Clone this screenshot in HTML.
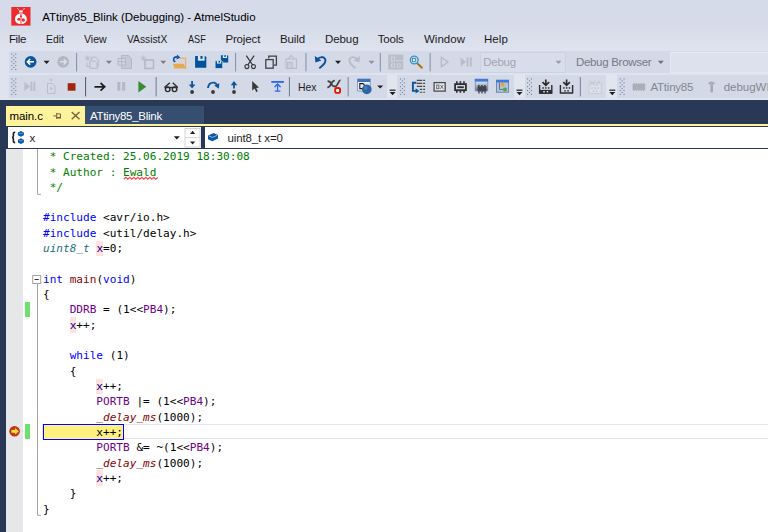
<!DOCTYPE html>
<html>
<head>
<meta charset="utf-8">
<title>ATtiny85_Blink (Debugging) - AtmelStudio</title>
<style>
html,body{margin:0;padding:0;}
body{width:768px;height:532px;overflow:hidden;position:relative;background:#d6dbe9;font-family:"Liberation Sans",sans-serif;font-size:12px;color:#1b1b1c;}
.abs{position:absolute;}
.ui{font-size:11.5px;line-height:14px;white-space:nowrap;}
#titletext{left:42px;top:10px;color:#000;}
.menu{top:32px;color:#1b1b1c;}
.tb{background:#d3d9e7;}
.ov{background:#e1e5f0;}
#dark{left:0;top:100px;width:768px;height:432px;background:#293955;}
#tab1{left:6px;top:106px;width:79px;height:20px;background:#fff29d;}
#tab1 span{position:absolute;left:4px;top:2px;color:#000;}
#tab2{left:85px;top:106px;width:119px;height:18px;background:#364e6f;}
#tab2 span{position:absolute;left:4px;top:2px;color:#fff;}
#tabline{left:6px;top:124px;width:762px;height:2px;background:#fff29d;}
#nav1{left:8px;top:127px;width:193px;height:21px;background:#fff;}
#nav2{left:205px;top:127px;width:563px;height:21px;background:#fff;}
#editor{left:6px;top:149px;width:762px;height:383px;background:#fff;}
#imargin{left:6px;top:149px;width:17px;height:383px;background:#e6e7e8;}
#code{left:0;top:1px;}
.code{font-family:"DejaVu Sans Mono","Liberation Mono",monospace;font-size:11.08px;line-height:15px;white-space:pre;left:43px;color:#000;height:15px;}
.c{color:#008000}.k{color:#0000ff}.m{color:#6f008a}.f{color:#880000}.t{color:#216f85;font-style:italic}.fi{color:#880000;font-style:italic}
.x{color:#000080;}
.u{position:relative;top:-1px;}
.hl{background:#ffe1e1;width:6.7px;height:15.5px;}
.sq{text-decoration:underline wavy #ff0000 1px;text-underline-offset:2px;}
svg{position:absolute;left:0;top:0;}
</style>
</head>
<body>

<div class="abs" style="left:0;top:24px;width:768px;height:76px;background:linear-gradient(#d6dbe9 0px,#dfe3ef 26px,#dfe3ef 76px)"></div>
<div class="abs tb" style="left:9px;top:51px;width:759px;height:22px"></div>
<div class="abs tb" style="left:9px;top:75px;width:378px;height:23px"></div>
<div class="abs ov" style="left:387px;top:75px;width:10px;height:23px"></div>
<div class="abs tb" style="left:397px;top:75px;width:117px;height:23px"></div>
<div class="abs ov" style="left:514px;top:75px;width:11px;height:23px"></div>
<div class="abs tb" style="left:525px;top:75px;width:81px;height:23px"></div>
<div class="abs ov" style="left:606px;top:75px;width:11px;height:23px"></div>
<div class="abs tb" style="left:617px;top:75px;width:151px;height:23px"></div>
<div class="abs ui" id="t_title" style="left:42.15px;top:10px;color:#000;letter-spacing:-0.013px">ATtiny85_Blink (Debugging) - AtmelStudio</div>
<div class="abs ui" id="t_file" style="left:8.90px;top:32px;color:#1b1b1c;letter-spacing:-0.317px">File</div>
<div class="abs ui" id="t_edit" style="left:45.90px;top:32px;color:#1b1b1c;letter-spacing:0.000px;transform:scaleX(0.9027);transform-origin:0 0">Edit</div>
<div class="abs ui" id="t_view" style="left:84.40px;top:32px;color:#1b1b1c;letter-spacing:0.000px;transform:scaleX(0.9172);transform-origin:0 0">View</div>
<div class="abs ui" id="t_va" style="left:127.40px;top:32px;color:#1b1b1c;letter-spacing:0.000px;transform:scaleX(0.8922);transform-origin:0 0">VAssistX</div>
<div class="abs ui" id="t_asf" style="left:187.65px;top:32px;color:#1b1b1c;letter-spacing:0.000px;transform:scaleX(0.7933);transform-origin:0 0">ASF</div>
<div class="abs ui" id="t_proj" style="left:225.40px;top:32px;color:#1b1b1c;letter-spacing:-0.142px">Project</div>
<div class="abs ui" id="t_build" style="left:279.90px;top:32px;color:#1b1b1c;letter-spacing:-0.062px">Build</div>
<div class="abs ui" id="t_debug" style="left:324.90px;top:32px;color:#1b1b1c;letter-spacing:-0.050px">Debug</div>
<div class="abs ui" id="t_tools" style="left:377.65px;top:32px;color:#1b1b1c;letter-spacing:-0.175px">Tools</div>
<div class="abs ui" id="t_window" style="left:423.90px;top:32px;color:#1b1b1c;letter-spacing:0.040px">Window</div>
<div class="abs ui" id="t_help" style="left:483.90px;top:32px;color:#1b1b1c;letter-spacing:0.100px">Help</div>
<div class="abs" style="left:480px;top:52px;width:84px;height:19px;border:1px solid #cbd2e2;background:#d8ddeb;box-sizing:content-box"></div>
<div class="abs ui" id="t_cdebug" style="left:483.15px;top:55px;color:#a2a6b2;letter-spacing:-0.212px">Debug</div>
<div class="abs ui" id="t_dbrowser" style="left:575.90px;top:55px;color:#767a85;letter-spacing:-0.292px">Debug Browser</div>
<div class="abs" style="left:670px;top:52px;width:110px;height:19px;border:1px solid #e6e9f3;background:#dde1ed"></div>
<div class="abs ui" id="t_hex" style="left:297.65px;top:80px;color:#1e1e1e;letter-spacing:0.000px;transform:scaleX(0.9052);transform-origin:0 0">Hex</div>
<div class="abs ui" id="t_attiny" style="left:650.40px;top:80px;color:#848893;letter-spacing:-0.214px">ATtiny85</div>
<div class="abs ui" id="t_dw" style="left:723.65px;top:80px;color:#848893;letter-spacing:0.000px">debugWIRE</div>
<div class="abs" id="dark"></div>
<div class="abs" id="tab1"></div>
<div class="abs" id="tab2"></div>
<div class="abs" id="tabline"></div>
<div class="abs" id="nav1"></div>
<div class="abs" id="nav2"></div>
<div class="abs" id="editor"></div>
<div class="abs" id="imargin"></div>

<div class="abs ui" id="t_main" style="left:9.40px;top:109px;color:#000;letter-spacing:-0.070px">main.c</div>
<div class="abs ui" id="t_tab2" style="left:89.90px;top:109px;color:#fff;letter-spacing:-0.273px">ATtiny85_Blink</div>
<div class="abs ui" id="t_navx" style="left:29.40px;top:131px;color:#1e1e1e;letter-spacing:0.000px">x</div>
<div class="abs ui" id="t_nav2" style="left:227.40px;top:131px;color:#1e1e1e;letter-spacing:-0.100px">uint8_t x=0</div>
<div class="abs" style="left:42px;top:424px;width:726px;height:13px;border-top:1px solid #e4e4f0;border-bottom:1px solid #e4e4f0;border-left:1px solid #e4e4f0"></div>
<div class="abs" style="left:43px;top:424px;width:79px;height:14px;border:1px solid #0000ff;background:#fff17f"></div>
<div class="abs" style="left:25px;top:302px;width:5px;height:15px;background:#6ce26c"></div>
<div class="abs" style="left:25px;top:424px;width:5px;height:15px;background:#6ce26c"></div>
<div class="abs hl" style="left:96.26px;top:240.5px"></div>
<div class="abs hl" style="left:69.58px;top:317.2px"></div>
<div class="abs hl" style="left:96.26px;top:378.5px"></div>
<div class="abs hl" style="left:96.26px;top:470.3px"></div>
<div class="abs" id="code">
<div class="abs code" style="top:148px"><span class="c"> * Created: 25.06.2019 18:30:08</span></div>
<div class="abs code" style="top:164px"><span class="c"> * Author : Ewald</span></div>
<div class="abs code" style="top:179px"><span class="c"> */</span></div>
<div class="abs code" style="top:209px"><span class="k">#include</span> &lt;avr/io.h&gt;</div>
<div class="abs code" style="top:225px"><span class="k">#include</span> &lt;util/delay.h&gt;</div>
<div class="abs code" style="top:240px"><span class="t">uint8<span class="u">_</span>t</span> <span class="x">x</span>=0;</div>
<div class="abs code" style="top:271px"><span class="k">int</span> <span class="f">main</span>(<span class="k">void</span>)</div>
<div class="abs code" style="top:286px">{</div>
<div class="abs code" style="top:301px">    <span class="m">DDRB</span> = (1&lt;&lt;<span class="m">PB4</span>);</div>
<div class="abs code" style="top:317px">    <span class="x">x</span>++;</div>
<div class="abs code" style="top:347px">    <span class="k">while</span> (1)</div>
<div class="abs code" style="top:363px">    {</div>
<div class="abs code" style="top:378px">        <span class="x">x</span>++;</div>
<div class="abs code" style="top:393px">        <span class="m">PORTB</span> |= (1&lt;&lt;<span class="m">PB4</span>);</div>
<div class="abs code" style="top:409px">        <span class="fi"><span class="u">_</span>delay<span class="u">_</span>ms</span>(1000);</div>
<div class="abs code" style="top:424px">        x++;</div>
<div class="abs code" style="top:439px">        <span class="m">PORTB</span> &amp;= ~(1&lt;&lt;<span class="m">PB4</span>);</div>
<div class="abs code" style="top:455px">        <span class="fi"><span class="u">_</span>delay<span class="u">_</span>ms</span>(1000);</div>
<div class="abs code" style="top:470px">        <span class="x">x</span>++;</div>
<div class="abs code" style="top:485px">    }</div>
<div class="abs code" style="top:501px">}</div>
</div>
<svg width="768" height="532" viewBox="0 0 768 532">
<g>
<rect x="11.3" y="7" width="19.2" height="18.6" fill="#ed2b2f"/>
<path d="M20.9 13.6 C24.6 13.6 26.8 16.2 26.8 19.2 C26.8 22.2 24.4 24 20.9 24 C17.4 24 15 22.2 15 19.2 C15 16.2 17.2 13.6 20.9 13.6 Z" fill="#fff"/>
<path d="M18.9 12.6 Q19 10.2 20.9 10.2 Q22.8 10.2 22.9 12.6 Z" fill="#fff"/>
<path d="M19.6 10.9 L18 8.9 M22.2 10.9 L23.8 8.9" stroke="#ffd5d5" stroke-width="0.7" fill="none"/>
<circle cx="17.7" cy="8.6" r="0.6" fill="#ffd5d5"/><circle cx="24.1" cy="8.6" r="0.6" fill="#ffd5d5"/>
<rect x="20.5" y="13.8" width="0.9" height="10.2" fill="#ed2b2f"/>
<circle cx="18.8" cy="19.2" r="1.5" fill="#ed2b2f"/>
<circle cx="23.3" cy="20" r="1.7" fill="#ed2b2f"/>
<circle cx="21" cy="16.3" r="1.1" fill="#ed2b2f"/>
</g>
<g fill="#74809b" transform="translate(11.3 53.4)"><rect x="0" y="0.00" width="1.1" height="1.1"/><rect x="3.9" y="0.00" width="1.1" height="1.1"/><rect x="1.95" y="1.93" width="1.1" height="1.1"/><rect x="0" y="3.86" width="1.1" height="1.1"/><rect x="3.9" y="3.86" width="1.1" height="1.1"/><rect x="1.95" y="5.79" width="1.1" height="1.1"/><rect x="0" y="7.72" width="1.1" height="1.1"/><rect x="3.9" y="7.72" width="1.1" height="1.1"/><rect x="1.95" y="9.65" width="1.1" height="1.1"/><rect x="0" y="11.58" width="1.1" height="1.1"/><rect x="3.9" y="11.58" width="1.1" height="1.1"/><rect x="1.95" y="13.51" width="1.1" height="1.1"/><rect x="0" y="15.44" width="1.1" height="1.1"/><rect x="3.9" y="15.44" width="1.1" height="1.1"/></g>
<g fill="#74809b" transform="translate(11.3 78.4)"><rect x="0" y="0.00" width="1.1" height="1.1"/><rect x="3.9" y="0.00" width="1.1" height="1.1"/><rect x="1.95" y="1.93" width="1.1" height="1.1"/><rect x="0" y="3.86" width="1.1" height="1.1"/><rect x="3.9" y="3.86" width="1.1" height="1.1"/><rect x="1.95" y="5.79" width="1.1" height="1.1"/><rect x="0" y="7.72" width="1.1" height="1.1"/><rect x="3.9" y="7.72" width="1.1" height="1.1"/><rect x="1.95" y="9.65" width="1.1" height="1.1"/><rect x="0" y="11.58" width="1.1" height="1.1"/><rect x="3.9" y="11.58" width="1.1" height="1.1"/><rect x="1.95" y="13.51" width="1.1" height="1.1"/><rect x="0" y="15.44" width="1.1" height="1.1"/><rect x="3.9" y="15.44" width="1.1" height="1.1"/></g>
<g fill="#74809b" transform="translate(399.9 78.4)"><rect x="0" y="0.00" width="1.1" height="1.1"/><rect x="3.9" y="0.00" width="1.1" height="1.1"/><rect x="1.95" y="1.93" width="1.1" height="1.1"/><rect x="0" y="3.86" width="1.1" height="1.1"/><rect x="3.9" y="3.86" width="1.1" height="1.1"/><rect x="1.95" y="5.79" width="1.1" height="1.1"/><rect x="0" y="7.72" width="1.1" height="1.1"/><rect x="3.9" y="7.72" width="1.1" height="1.1"/><rect x="1.95" y="9.65" width="1.1" height="1.1"/><rect x="0" y="11.58" width="1.1" height="1.1"/><rect x="3.9" y="11.58" width="1.1" height="1.1"/><rect x="1.95" y="13.51" width="1.1" height="1.1"/><rect x="0" y="15.44" width="1.1" height="1.1"/><rect x="3.9" y="15.44" width="1.1" height="1.1"/></g>
<g fill="#74809b" transform="translate(527.0 78.4)"><rect x="0" y="0.00" width="1.1" height="1.1"/><rect x="3.9" y="0.00" width="1.1" height="1.1"/><rect x="1.95" y="1.93" width="1.1" height="1.1"/><rect x="0" y="3.86" width="1.1" height="1.1"/><rect x="3.9" y="3.86" width="1.1" height="1.1"/><rect x="1.95" y="5.79" width="1.1" height="1.1"/><rect x="0" y="7.72" width="1.1" height="1.1"/><rect x="3.9" y="7.72" width="1.1" height="1.1"/><rect x="1.95" y="9.65" width="1.1" height="1.1"/><rect x="0" y="11.58" width="1.1" height="1.1"/><rect x="3.9" y="11.58" width="1.1" height="1.1"/><rect x="1.95" y="13.51" width="1.1" height="1.1"/><rect x="0" y="15.44" width="1.1" height="1.1"/><rect x="3.9" y="15.44" width="1.1" height="1.1"/></g>
<g fill="#74809b" transform="translate(619.6 78.4)"><rect x="0" y="0.00" width="1.1" height="1.1"/><rect x="3.9" y="0.00" width="1.1" height="1.1"/><rect x="1.95" y="1.93" width="1.1" height="1.1"/><rect x="0" y="3.86" width="1.1" height="1.1"/><rect x="3.9" y="3.86" width="1.1" height="1.1"/><rect x="1.95" y="5.79" width="1.1" height="1.1"/><rect x="0" y="7.72" width="1.1" height="1.1"/><rect x="3.9" y="7.72" width="1.1" height="1.1"/><rect x="1.95" y="9.65" width="1.1" height="1.1"/><rect x="0" y="11.58" width="1.1" height="1.1"/><rect x="3.9" y="11.58" width="1.1" height="1.1"/><rect x="1.95" y="13.51" width="1.1" height="1.1"/><rect x="0" y="15.44" width="1.1" height="1.1"/><rect x="3.9" y="15.44" width="1.1" height="1.1"/></g>
<rect x="76.0" y="52.8" width="1.1" height="18.6" fill="#8a94ab"/>
<rect x="235.0" y="52.8" width="1.1" height="18.6" fill="#8a94ab"/>
<rect x="305.4" y="52.8" width="1.1" height="18.6" fill="#8a94ab"/>
<rect x="379.8" y="52.8" width="1.1" height="18.6" fill="#8a94ab"/>
<rect x="429.6" y="52.8" width="1.1" height="18.6" fill="#8a94ab"/>
<rect x="85.0" y="77" width="1.1" height="19.4" fill="#5a6276"/>
<rect x="155.6" y="77" width="1.1" height="19.4" fill="#78829a"/>
<rect x="288.9" y="77" width="1.1" height="19.4" fill="#78829a"/>
<rect x="347.6" y="77" width="1.1" height="19.4" fill="#808aa1"/>
<rect x="579.8" y="77" width="1.1" height="19.4" fill="#7f8699"/>
<path transform="translate(46.6 62.3)" fill="#1e1e1e" d="M-3 -1.5 L3 -1.5 L0 1.7 Z"/>
<path transform="translate(108.9 62.3)" fill="#7d8087" d="M-3 -1.5 L3 -1.5 L0 1.7 Z"/>
<path transform="translate(163.3 62.3)" fill="#7d8087" d="M-3 -1.5 L3 -1.5 L0 1.7 Z"/>
<path transform="translate(338.0 62.3)" fill="#1e1e1e" d="M-3 -1.5 L3 -1.5 L0 1.7 Z"/>
<path transform="translate(371.5 62.3)" fill="#8f9299" d="M-3 -1.5 L3 -1.5 L0 1.7 Z"/>
<path transform="translate(558.5 62.3)" fill="#9a9ea9" d="M-3 -1.5 L3 -1.5 L0 1.7 Z"/>
<path transform="translate(660.8 62.3)" fill="#6e727c" d="M-3 -1.5 L3 -1.5 L0 1.7 Z"/>
<path transform="translate(380.2 86.9)" fill="#1e1e1e" d="M-3 -1.5 L3 -1.5 L0 1.7 Z"/>
<g transform="translate(392.6 93.0)" fill="#1e1e1e"><rect x="-3" y="-3.4" width="6" height="1.2"/><path d="M-3 -1 L3 -1 L0 2.2 Z"/></g>
<g transform="translate(519.5 93.0)" fill="#1e1e1e"><rect x="-3" y="-3.4" width="6" height="1.2"/><path d="M-3 -1 L3 -1 L0 2.2 Z"/></g>
<g transform="translate(612.3 93.0)" fill="#1e1e1e"><rect x="-3" y="-3.4" width="6" height="1.2"/><path d="M-3 -1 L3 -1 L0 2.2 Z"/></g>
<circle cx="30.6" cy="61.8" r="5.9" fill="#0c569f"/>
<path d="M34 61.8 H27.6 M30.2 59 L27.4 61.8 L30.2 64.6" stroke="#fff" stroke-width="1.5" fill="none"/>
<circle cx="63.2" cy="61.8" r="5.9" fill="#b3b7c0"/>
<path d="M59.8 61.8 H66.2 M63.6 59 L66.4 61.8 L63.6 64.6" stroke="#d9dde8" stroke-width="1.5" fill="none"/>
<g stroke="#b4b9c5" fill="none" stroke-width="1">
<path d="M91.6 60.4 V57.2 H95.6 L98.2 59.8 V66.4 H97.6"/>
<path d="M89.9 61 H94.6 L97.2 63.4 V68.3 H89.9 Z" fill="#d3d9e7"/>
<path d="M87 63 V66.6 H89.4"/>
<path d="M87.7 55.4 V61 M84.9 58.2 H90.5 M85.7 56.2 L89.7 60.2 M89.7 56.2 L85.7 60.2" stroke-width="0.7"/>
</g>
<g stroke="#b4b9c5" fill="#c4c9d5" stroke-width="1">
<path d="M121.5 55.5 H128.5 L131.5 58.5 V68.5 H121.5 Z"/>
<rect x="118" y="58.5" width="7.5" height="6.5" fill="#d0d5e0"/>
<path d="M121.7 58.5 V65 M118 61.7 H125.5" stroke="#b4b9c5"/>
</g>
<g stroke="#b4b9c5" fill="none">
<rect x="145" y="60" width="8.5" height="8.5" stroke-width="1.6" fill="#d3d8e4"/>
<path d="M143.5 55.3 V61 M140.7 58.2 H146.3 M141.5 56.2 L145.5 60.2 M145.5 56.2 L141.5 60.2" stroke-width="0.7"/>
</g>
<path d="M176.4 58.2 H185.6 V64 H176.4 Z" fill="#d6d4e1"/>
<path d="M179.6 58.2 H185.7 V68.3" stroke="#e3a951" stroke-width="1" fill="none"/>
<path d="M173 63.8 H183.6 L186.1 68.5 H174.4 Z" fill="#e5a94f"/>
<path d="M173.9 61.2 Q172.6 56.6 177.6 56.9" stroke="#0c5aa6" stroke-width="1.7" fill="none"/>
<path d="M177 54.6 L180.4 57.6 L176.6 59.6 Z" fill="#0c5aa6"/>
<path d="M173.2 60.4 L176.2 60.9 L174.2 62.6 Z" fill="#0c5aa6"/>
<path d="M195.1 56 H205.2 L206.3 57.2 V67.7 H195.1 Z" fill="#00539c"/>
<rect x="197.9" y="56" width="6.7" height="4.7" fill="#dfe4f1"/>
<rect x="200.4" y="56" width="2.2" height="2.8" fill="#00539c"/>
<path d="M220.9 55.2 H227.4 L228.2 56 V62.5 H220.9 Z" fill="#00539c"/>
<rect x="222.8" y="55.2" width="4.2" height="2.8" fill="#dfe4f1"/>
<rect x="224.4" y="55.2" width="1.4" height="1.8" fill="#00539c"/>
<path d="M215.1 60.8 H222 L222.7 61.6 V68.5 H215.1 Z" fill="#00539c" stroke="#d3d9e7" stroke-width="0.8"/>
<rect x="217" y="60.9" width="4.2" height="2.7" fill="#dfe4f1"/>
<rect x="218.6" y="60.9" width="1.4" height="1.8" fill="#00539c"/>
<g stroke="#3b3b3b" fill="none" stroke-width="1.3">
<path d="M246.3 55.6 L252.6 65 M254.1 55.6 L247.8 65"/>
<circle cx="246.9" cy="66.6" r="2" stroke-width="1.1"/>
<circle cx="253.5" cy="66.6" r="2" stroke-width="1.1"/>
</g>
<g stroke="#424242" fill="none" stroke-width="1.3">
<path d="M268.8 58.6 V56.2 H276.4 V65.2 H274"/>
<rect x="265.8" y="59.6" width="7.4" height="8.6" fill="#d5dbe9"/>
</g>
<g stroke="#b9bdc8" fill="none" stroke-width="1.1">
<path d="M288 59 H296.5 V68.4 H286 V59 H288 L291.2 55.4 L294.4 59"/>
<rect x="287.5" y="62.5" width="4.6" height="6" fill="#cbd0dc"/>
</g>
<path d="M316.6 59.6 Q322.5 54.8 325.3 59.3 Q326.6 62.8 319.3 68.2" stroke="#0c4f9e" stroke-width="2" fill="none"/>
<path d="M314.8 56 L315.4 62.6 L321.4 60.6 Z" fill="#0c4f9e"/>
<path d="M358.2 59.6 Q352.3 54.8 349.5 59.3 Q348.2 62.8 355.5 68.2" stroke="#b7bbc6" stroke-width="1.8" fill="none"/>
<path d="M360 56 L359.4 62.6 L353.4 60.6 Z" fill="#b7bbc6"/>
<rect x="388.2" y="54.6" width="15" height="15" fill="#babec8"/>
<g stroke="#cdd2dd" fill="none" stroke-width="1">
<rect x="391.5" y="57" width="3" height="4"/>
<rect x="391.5" y="64" width="3" height="3"/>
<rect x="397.2" y="64" width="3" height="3"/>
<path d="M396 60.5 H403"/>
</g>
<path d="M417 63 L421.8 67.6" stroke="#c68428" stroke-width="2.4" stroke-linecap="round"/>
<path d="M417.4 63.4 L421.6 67.4" stroke="#5b4a2a" stroke-width="0.6"/>
<circle cx="414.2" cy="60" r="3.9" fill="#a9dcf0" stroke="#3d8fc6" stroke-width="1.3"/>
<rect x="412.5" y="58.5" width="3" height="2.8" fill="#d9eff8" stroke="#2f6aa0" stroke-width="0.7"/>
<path d="M441.3 57.2 L448 62 L441.3 66.8 Z" fill="none" stroke="#b4b8c3" stroke-width="1.2"/>
<path d="M460.6 57.4 L466 62 L460.6 66.6 Z" fill="#b9bdc8"/>
<rect x="466.6" y="57.4" width="1.9" height="9.2" fill="#b9bdc8"/>
<rect x="469.8" y="57.4" width="1.9" height="9.2" fill="#b9bdc8"/>
<path d="M24.4 81.8 L30 86.4 L24.4 91 Z" fill="#babec9"/>
<rect x="30.4" y="81.8" width="1.9" height="9.2" fill="#babec9"/>
<rect x="33.4" y="81.8" width="1.9" height="9.2" fill="#babec9"/>
<g stroke="#b9bdc8" fill="none" stroke-width="1">
<path d="M47.5 83.5 H52.5 L55 86 V93.5 H47.5 Z"/>
<path d="M50.3 86.6 L53 88.6 L50.3 90.6 Z" fill="#b9bdc8" stroke="none"/>
<path d="M49.4 79.2 H52.8 L51.1 81.4 Z" fill="#b9bdc8" stroke="none"/>
</g>
<rect x="67.7" y="83.2" width="7.8" height="7.5" fill="#a1260d"/>
<path d="M94.5 86.8 H104.2 M100.5 83 L104.7 86.8 L100.5 90.6" stroke="#1e1e1e" stroke-width="1.7" fill="none"/>
<rect x="117.3" y="82" width="3.1" height="8.7" fill="#b5b9c4"/><rect x="122.1" y="82" width="3.1" height="8.7" fill="#b5b9c4"/>
<path d="M138.4 81.1 L146.3 86.8 L138.4 92.5 Z" fill="#388a34"/>
<g stroke="#2d2d2d" fill="none" stroke-width="1.4">
<circle cx="167.7" cy="89.3" r="2.3"/><circle cx="174.5" cy="89.3" r="2.3"/>
<path d="M164.5 87.5 H177.7" stroke-width="1.3"/>
<path d="M164.7 87.3 L169.9 82.8 M177.5 87.3 L172.7 82.8"/>
</g>
<path d="M192.1 81 V86" stroke="#0c569f" stroke-width="1.8"/>
<path d="M188.8 84.6 H195.4 L192.1 88.6 Z" fill="#0c569f"/>
<circle cx="192.1" cy="92" r="1.9" fill="#383838"/>
<path d="M208 88 Q208.6 82.4 213.4 82.6 Q216.6 82.8 217.4 86" stroke="#0c569f" stroke-width="1.9" fill="none"/>
<path d="M214.2 85.4 L219.4 83.2 L218.8 88.8 Z" fill="#0c569f"/>
<circle cx="213" cy="92" r="1.9" fill="#383838"/>
<path d="M234 88.4 V84" stroke="#0c569f" stroke-width="1.8"/>
<path d="M230.7 85.2 H237.3 L234 81 Z" fill="#0c569f"/>
<circle cx="234" cy="92" r="1.9" fill="#383838"/>
<path d="M252.2 81 V90.6 L254.6 88.6 L256.2 92 L257.8 91.2 L256.2 88 L259 87.6 Z" fill="#383838"/>
<rect x="271.3" y="81" width="12.6" height="1.8" fill="#2b66f0"/>
<path d="M277.6 85 V91 M274.8 91.1 H280.4" stroke="#2b66f0" stroke-width="1.3" fill="none"/>
<path d="M274.6 87 L277.6 84 L280.6 87" stroke="#2b66f0" stroke-width="1.3" fill="none"/>
<path d="M327.6 81.2 Q330.4 81.4 331.5 84 T335.2 86.4 M327.4 87.6 Q330 86.8 331.4 83.6 T334.8 80.6 M334.6 87.2 Q337 86 338.2 83 T340.6 80.4" stroke="#404040" stroke-width="1.8" fill="none"/>
<rect x="335.2" y="88" width="4.9" height="4.9" rx="1.7" fill="#fff" stroke="#e51400" stroke-width="1.9"/>
<rect x="357.6" y="79" width="12.6" height="12" fill="#e8edf6" stroke="#6f8fc4" stroke-width="0.8"/>
<rect x="357.6" y="79" width="12.6" height="3" fill="#3f73bd"/>
<path d="M359.8 83.6 H363 L364.4 85 V88.6 H359.8 Z" fill="none" stroke="#1e1e1e" stroke-width="1.1"/>
<circle cx="366.8" cy="89.4" r="4.8" fill="#2e64a6"/>
<circle cx="365.6" cy="88" r="2" fill="#4f86c6" opacity="0.7"/>
<path d="M416.8 80.4 H422.3 M423.2 80.4 H425.1 M416.8 83.4 H422.3 M423.2 83.4 H425.1 M416.8 86.4 H422.3 M423.2 86.4 H425.1 M419.8 89.4 H422.3 M423.2 89.4 H425.1 M419.8 92.3 H422.3 M423.2 92.3 H425.1" stroke="#4a4a4a" stroke-width="1.1" fill="none"/>
<path d="M416.4 82.8 H412.9 V90.9 H416.4" stroke="#0c569f" stroke-width="1.9" fill="none"/>
<path d="M415.6 88.2 L419.5 90.9 L415.6 93.6 Z" fill="#0c569f"/>
<rect x="434.1" y="82.6" width="11.1" height="8.5" fill="#e2e5ee" stroke="#4d4d4d" stroke-width="1.3"/>
<rect x="436.7" y="85.1" width="2.2" height="3.6" fill="none" stroke="#666" stroke-width="0.9"/>
<path d="M440.4 85 L443.2 88.8 M443.2 85 L440.4 88.8" stroke="#666" stroke-width="0.9" fill="none"/>
<g stroke="#2d2d2d" fill="none">
<rect x="455.1" y="84.1" width="10.8" height="6.1" stroke-width="1.8"/>
<rect x="457.4" y="86.3" width="6.4" height="1.8" fill="#2d2d2d" stroke="none"/>
<path d="M456.8 81.2 V83.4 M460.4 81.2 V83.4 M464 81.2 V83.4 M456.8 91 V92.8 M460.4 91 V92.8 M464 91 V92.8" stroke-width="1.6"/>
</g>
<linearGradient id="wg" x1="0" y1="0" x2="0" y2="1"><stop offset="0" stop-color="#eef2fa"/><stop offset="0.45" stop-color="#b9c4d8"/><stop offset="1" stop-color="#5d6a84"/></linearGradient>
<rect x="475.2" y="79.2" width="12.6" height="11.6" fill="url(#wg)" stroke="#6f86b3" stroke-width="0.7"/>
<rect x="474.9" y="78.9" width="13.2" height="2.7" fill="#3b7be0"/>
<rect x="477.6" y="86.2" width="8.8" height="5.4" fill="#3f444e"/>
<path d="M478.9 84.6 L480.3 86.3 H477.6 Z M481.9 84.6 L483.3 86.3 H480.6 Z M484.9 84.6 L486.3 86.3 H483.6 Z" fill="#3f444e"/>
<path d="M479 91.4 V93.4 M482 91.4 V93.4 M485 91.4 V93.4" stroke="#3f444e" stroke-width="1.3"/>
<rect x="496.4" y="80.2" width="12.2" height="12" fill="#b1c3df" stroke="#5877a8" stroke-width="0.8"/>
<rect x="496" y="79.9" width="13" height="2.6" fill="#3b7be0"/>
<path d="M499.5 82.6 V89.4 H504" stroke="#6a6a6a" stroke-width="0.9" fill="none"/>
<circle cx="502.6" cy="84.8" r="2" fill="#e8a33a"/>
<circle cx="505" cy="89.6" r="2" fill="#4aa84a"/>
<g transform="translate(538.9 0)">
<path d="M6.9 79.4 V84.6 M3.6 82.2 L6.9 85.4 L10.2 82.2" stroke="#2d2d2d" stroke-width="1.7" fill="none"/>
<path d="M0.7 84.9 V93 H12.9 V84.9" stroke="#2d2d2d" stroke-width="1.4" fill="none"/>
<g fill="#2d2d2d"><rect x="3.4" y="87.2" width="1.5" height="1.5"/><rect x="6.2" y="87.2" width="1.5" height="1.5"/><rect x="9" y="87.2" width="1.5" height="1.5"/></g>
<rect x="0.7" y="89.9" width="12.2" height="3.8" fill="#2d2d2d"/>
<g fill="#e8ebf2"><rect x="4.4" y="91" width="1.5" height="1.4"/><rect x="7.8" y="91" width="1.5" height="1.4"/></g>
</g>
<g transform="translate(559.7 0)">
<path d="M6.9 79.4 V84.6 M3.6 82.2 L6.9 85.4 L10.2 82.2" stroke="#2d2d2d" stroke-width="1.7" fill="none"/>
<path d="M0.7 84.9 V93 H12.9 V84.9" stroke="#2d2d2d" stroke-width="1.4" fill="none"/>
<g fill="#2d2d2d"><rect x="3.4" y="87.2" width="1.5" height="1.5"/><rect x="6.2" y="87.2" width="1.5" height="1.5"/><rect x="9" y="87.2" width="1.5" height="1.5"/></g>
<g fill="#2d2d2d"><rect x="4.6" y="90.1" width="1.5" height="1.5"/><rect x="7.6" y="90.1" width="1.5" height="1.5"/></g>
</g>
<g transform="translate(588.1 0)">
<rect x="0.9" y="83.2" width="12.2" height="10.2" fill="#dde0e9" stroke="#c6cad4" stroke-width="0.9"/>
<path d="M1.6 80.6 L7 86 M7 80.6 L1.6 86" stroke="#bbbfca" stroke-width="0.9"/>
<g fill="#b9bdc8"><rect x="3.2" y="87.4" width="1.4" height="1.3"/><rect x="6.2" y="87.4" width="1.4" height="1.3"/><rect x="9.2" y="87.4" width="1.4" height="1.3"/><rect x="4.6" y="90.4" width="1.4" height="1.3"/><rect x="7.6" y="90.4" width="1.4" height="1.3"/><rect x="10.2" y="81.4" width="1.4" height="1.3"/><rect x="8.4" y="84.4" width="1.4" height="1.3"/></g>
</g>
<rect x="632.6" y="84" width="12.6" height="6" fill="#aaaeb9"/>
<path d="M634 82.9 V91.1 M636.4 82.9 V91.1 M638.8 82.9 V91.1 M641.2 82.9 V91.1 M643.6 82.9 V91.1" stroke="#aaaeb9" stroke-width="1.2"/>
<path d="M708 83.4 Q711.4 79.6 715.2 83.6 L713.6 84.4 Q711.6 82.6 709.6 84.4 Z" fill="#a6aab5"/>
<rect x="710.4" y="83.6" width="2.6" height="8.8" rx="1" fill="#a6aab5"/>
<g stroke="#75633d" fill="none" stroke-width="1">
<path d="M53.3 115.9 H56.6 M56.7 112.9 V119 M56.7 113.9 H60.5 V117.4"/>
<path d="M56.7 117.7 H61" stroke-width="1.7"/>
<path d="M71.7 112.1 L79.5 119.3 M79.5 112.1 L71.7 119.3" stroke-width="1.4"/>
</g>
<path d="M15.2 132.2 Q13.4 132.2 13.4 133.8 V135.9 Q13.4 137.3 12 137.4 Q13.4 137.5 13.4 138.9 V141 Q13.4 142.6 15.2 142.6" stroke="#1e1e1e" stroke-width="1.6" fill="none"/>
<g fill="#0c5aa6">
<path d="M17.9 132.6 L20.9 131.1 L23.9 132.6 V135.3 L20.9 136.8 L17.9 135.3 Z"/>
<path d="M17.9 139.7 L20.9 138.2 L23.9 139.7 V142.5 L20.9 144 L17.9 142.5 Z"/>
</g>
<path d="M19 132.9 L20.9 133.8 L22.8 132.9" stroke="#9fc4e6" stroke-width="0.6" fill="none"/>
<path d="M19 140 L20.9 140.9 L22.8 140" stroke="#9fc4e6" stroke-width="0.6" fill="none"/>
<path transform="translate(176.8 137.8)" fill="#1e1e1e" d="M-3 -1.5 L3 -1.5 L0 1.7 Z"/>
<rect x="185" y="128.5" width="15" height="18.5" fill="#fff" stroke="#d4d4d4" stroke-width="1"/>
<path d="M185 137.7 H200" stroke="#d4d4d4" stroke-width="1"/>
<path d="M190 134 L195.2 134 L192.6 130.8 Z" fill="#1e1e1e"/>
<path d="M190 141.4 L195.2 141.4 L192.6 144.6 Z" fill="#1e1e1e"/>
<path d="M208 135.6 L213.6 133 L218 135 V138.6 L212.4 141.2 L208 139.2 Z" fill="#0c5aa6"/>
<path d="M208.8 135.8 L212.6 137.4 L217.4 135.2" stroke="#bcd6ee" stroke-width="0.7" fill="none"/>
<path d="M123.8 179.2 L125.8 177.3 L127.8 179.2 L129.8 177.3 L131.8 179.2 L133.8 177.3 L135.8 179.2 L137.8 177.3 L139.8 179.2 L141.8 177.3 L143.8 179.2 L145.8 177.3 L147.8 179.2 L149.8 177.3 L151.8 179.2 L153.8 177.3 L155.8 179.2 L157.8 177.3" stroke="#ff4545" stroke-width="1.1" fill="none"/>
<g stroke="#a5a5a5" stroke-width="1" fill="none">
<path d="M37.5 149 V194.3 H41"/>
<rect x="32.7" y="275.5" width="8" height="8" fill="#fff"/>
<path d="M37.5 283.5 V515.3 H41"/>
</g>
<path d="M34.6 279.5 H38.8" stroke="#333" stroke-width="1"/>
<circle cx="14.6" cy="431.3" r="5.3" fill="#e0241c"/>
<path d="M11 429.4 H14.8 V427.2 L19.4 431.3 L14.8 435.4 V433.2 H11 Z" fill="#ffd93b" stroke="#6b4a12" stroke-width="0.7"/>
</svg>
</body></html>
